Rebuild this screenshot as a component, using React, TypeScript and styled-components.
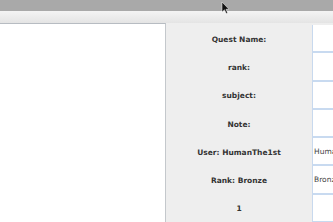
import styled, { createGlobalStyle } from "styled-components";

const GlobalStyle = createGlobalStyle`
  html, body {
    margin: 0;
    padding: 0;
    overflow: hidden;
  }
  body {
    font-family: "DejaVu Sans", "Liberation Sans", sans-serif;
  }
`;

const labels = [
  "Quest Name:",
  "rank:",
  "subject:",
  "Note:",
  "User: HumanThe1st",
  "Rank: Bronze",
  "1",
];

const fields = ["", "", "", "", "HumanThe1st", "Bronze", ""];

const App = () => {
  return (
    <>
      <GlobalStyle />
      <Screen>
        <TitleBar>
          <Cursor viewBox="0 0 8 12">
            <path d="M1 0 L1 10 L3.5 7.8 L5.2 11.5 L6.6 10.9 L5 7.3 L8 7.3 Z" fill="#111" stroke="#fff" strokeWidth="0.5" />
          </Cursor>
        </TitleBar>
        <ToolStrip />
        <Body>
          <Canvas />
          <LabelColumn>
            {labels.map((l) => (
              <Label key={l}>{l}</Label>
            ))}
          </LabelColumn>
          <FieldColumn>
            {fields.map((f, i) => (
              <Field key={i}>{f}</Field>
            ))}
          </FieldColumn>
        </Body>
      </Screen>
    </>
  );
};

export default App;

const Screen = styled.div`
  width: 333px;
  height: 222px;
  display: flex;
  flex-direction: column;
  background: #eeeeee;
  overflow: hidden;
`;

const TitleBar = styled.div`
  flex: none;
  height: 11px;
  background: #a9a9a9;
  position: relative;
`;

const Cursor = styled.svg`
  position: absolute;
  left: 221px;
  top: 2px;
  width: 8px;
  height: 12px;
`;

const ToolStrip = styled.div`
  flex: none;
  height: 12px;
  background: linear-gradient(#f4f4f4, #e4e4e4);
`;

const Body = styled.div`
  flex: 1;
  display: flex;
  min-height: 0;
`;

const Canvas = styled.div`
  width: 165px;
  background: #ffffff;
  border-top: 1px solid #b7bcc2;
  border-right: 1px solid #c4c8cc;
  box-shadow: 1px 0 0 #dfe1e3;
`;

const LabelColumn = styled.div`
  width: 146px;
  padding-top: 2px;
  display: grid;
  grid-auto-rows: 28.3px;
  background: #eeeeee;
`;

const Label = styled.div`
  display: flex;
  align-items: center;
  justify-content: center;
  font-size: 7.5px;
  font-weight: bold;
  color: #333333;
`;

const FieldColumn = styled.div`
  flex: 1;
  margin-top: 2px;
  display: grid;
  grid-auto-rows: 28.3px;
  background: #ffffff;
  border-left: 1px solid #c8d9ee;
  overflow: hidden;
`;

const Field = styled.div`
  display: flex;
  align-items: center;
  padding-left: 1px;
  font-size: 7.5px;
  color: #444444;
  white-space: nowrap;
  border-bottom: 2px solid #c8daf0;
`;
